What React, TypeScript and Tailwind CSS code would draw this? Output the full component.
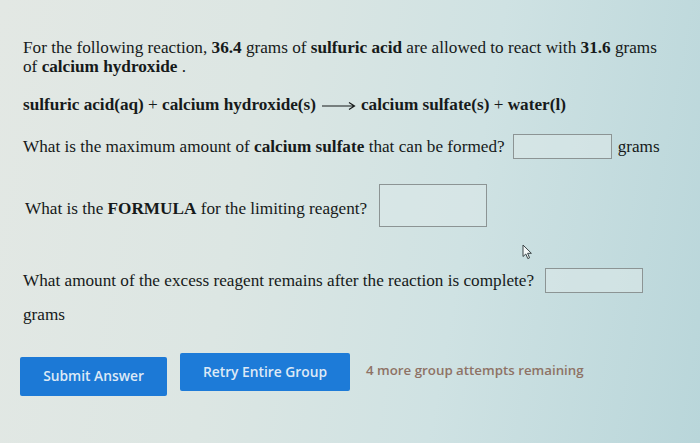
import React from "react";

const serif = { fontFamily: '"Liberation Serif", "Times New Roman", serif' };
const sans = { fontFamily: '"Open Sans", "Liberation Sans", sans-serif' };

function AnswerBox({ className }: { className: string }) {
  return <span className={`inline-block border border-[#8c9494] bg-[#dbe8e8]/60 align-middle ${className}`} />;
}

function Arrow() {
  return (
    <svg className="ml-[6px] mr-[5px] inline-block align-middle" width="34" height="10" viewBox="0 0 34 10">
      <path d="M0 5 H32 M27 1.5 L32.5 5 L27 8.5" fill="none" stroke="#161a1a" strokeWidth="1.2" />
    </svg>
  );
}

function Cursor() {
  return (
    <svg className="absolute left-[522px] top-[244px]" width="12" height="16" viewBox="0 0 12 16">
      <path d="M1 1 L1 12.5 L3.8 10 L5.8 14.6 L7.6 13.8 L5.6 9.3 L9.4 9.3 Z" fill="#f4f8f8" stroke="#3a4446" strokeWidth="1" strokeLinejoin="round" />
    </svg>
  );
}

export default function App() {
  return (
    <div className="relative h-[443px] w-[700px] overflow-hidden bg-[linear-gradient(100deg,#e3e8e4_0%,#dce6e3_35%,#cfe2e3_65%,#b9d6da_100%)] text-[#161a1a]">
      <div className="px-[23px] pt-[38px] text-[17.2px] leading-[19px]" style={serif}>
        <p>
          For the following reaction, <b>36.4</b> grams of <b>sulfuric acid</b> are allowed to react with <b>31.6</b> grams
          <br />
          of <b>calcium hydroxide</b> .
        </p>

        <p className="mt-[19px] font-bold">
          sulfuric acid(aq) <span className="font-normal">+</span> calcium hydroxide(s)
          <Arrow />
          calcium sulfate(s) <span className="font-normal">+</span> water(l)
        </p>

        <div className="mt-[20px] flex items-center gap-[8px]">
          <span>
            What is the maximum amount of <b>calcium sulfate</b> that can be formed?
          </span>
          <AnswerBox className="h-[25px] w-[99px]" />
          <span className="ml-[-2px]">grams</span>
        </div>

        <div className="mt-[25px] flex items-end gap-[12px] pl-[2px]">
          <span className="mb-[9px]">
            What is the <b>FORMULA</b> for the limiting reagent?
          </span>
          <AnswerBox className="h-[43px] w-[108px]" />
        </div>

        <div className="mt-[41px] flex items-center gap-[11px]">
          <span>What amount of the excess reagent remains after the reaction is complete?</span>
          <AnswerBox className="h-[25px] w-[98px]" />
        </div>
        <p className="mt-[12px]">grams</p>
      </div>

      <div className="mt-[29px] flex items-start pl-[20px]" style={sans}>
        <button className="mt-[4px] h-[39px] w-[147px] rounded-[2px] bg-[#1c79d6] text-[13.8px] font-semibold text-[#dde9f6]">
          Submit Answer
        </button>
        <button className="ml-[13px] h-[38px] w-[170px] rounded-[2px] bg-[#1d7bd8] text-[13.8px] font-semibold text-[#dde9f6]">
          Retry Entire Group
        </button>
        <span className="ml-[16px] mt-[8px] text-[13.3px] font-semibold text-[#8e7265]">4 more group attempts remaining</span>
      </div>

      <Cursor />
    </div>
  );
}
